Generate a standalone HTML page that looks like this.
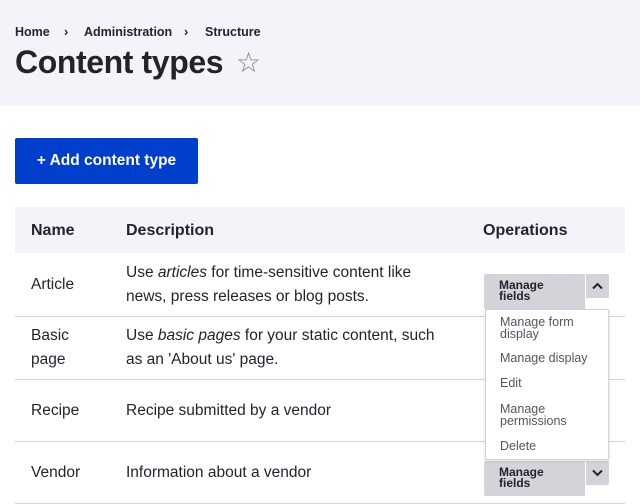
<!DOCTYPE html>
<html><head><meta charset="utf-8"><style>
*{margin:0;padding:0;box-sizing:border-box}
body{width:640px;height:504px;overflow:hidden;background:#fff;font-family:"Liberation Sans",sans-serif;color:#222330;position:relative}
.a{position:absolute;white-space:nowrap}
.hdr{position:absolute;left:0;top:0;width:640px;height:106px;background:#f3f4f9}
.bc{font-size:12.5px;font-weight:bold;top:25px;color:#222330}
h1{position:absolute;left:15px;top:44px;font-size:32px;font-weight:bold;letter-spacing:-0.4px;color:#232429}
.star{left:236px;top:46px;font-size:28px;color:#828388}
.btn{position:absolute;left:15px;top:138px;width:183px;height:46px;background:#003ecc;border-radius:2px;color:#fff;font-weight:bold;font-size:15.5px;line-height:46px;text-align:center}
.th{position:absolute;left:15px;top:207px;width:610px;height:46px;background:#f3f4f9}
.t{font-size:15.5px;line-height:24px}
.b{font-weight:bold}
.line{position:absolute;left:15px;width:610px;height:1px;background:#d4d4d8}
.mf{position:absolute;left:484px;width:101px;height:35px;background:#d3d4d9;border-radius:2px 0 0 2px;font-size:12px;font-weight:bold;line-height:11px;padding:6px 0 0 15px;color:#222330}
.tg{position:absolute;left:586px;width:23px;height:24px;background:#d3d4d9;border-radius:0 2px 2px 0}
.dd{position:absolute;left:485px;top:309px;width:124px;height:151px;background:#fff;border:1px solid #d4d4d8;box-shadow:0 1px 3px rgba(0,0,0,.15)}
.it{position:absolute;left:14px;font-size:12.5px;line-height:11.5px;color:#545560;white-space:nowrap}
</style></head><body>
<div class="hdr"></div>
<div class="a bc" style="left:15px">Home</div>
<div class="a bc" style="left:64px">›</div>
<div class="a bc" style="left:84px">Administration</div>
<div class="a bc" style="left:184px">›</div>
<div class="a bc" style="left:205px">Structure</div>
<h1>Content types</h1>
<div class="a star">☆</div>
<div class="btn">+ Add content type</div>
<div class="th"></div>
<div class="a t b" style="left:31px;top:219px;font-size:16px">Name</div>
<div class="a t b" style="left:126px;top:219px;font-size:16px">Description</div>
<div class="a t b" style="left:483px;top:219px;font-size:16px">Operations</div>

<div class="a t" style="left:31px;top:273px">Article</div>
<div class="a t" style="left:126px;top:261px">Use <i>articles</i> for time-sensitive content like<br>news, press releases or blog posts.</div>
<div class="line" style="top:316px"></div>
<div class="a t" style="left:31px;top:324px">Basic<br>page</div>
<div class="a t" style="left:126px;top:324px">Use <i>basic pages</i> for your static content, such<br>as an 'About us' page.</div>
<div class="line" style="top:379px"></div>
<div class="a t" style="left:31px;top:399px">Recipe</div>
<div class="a t" style="left:126px;top:399px">Recipe submitted by a vendor</div>
<div class="line" style="top:441px"></div>
<div class="a t" style="left:31px;top:461px">Vendor</div>
<div class="a t" style="left:126px;top:461px">Information about a vendor</div>
<div class="line" style="top:503px"></div>

<div class="mf" style="top:274px">Manage<br>fields</div>
<div class="tg" style="top:274px"><svg width="23" height="24"><path d="M7 14.5l4.5-4.5 4.5 4.5" fill="none" stroke="#222330" stroke-width="2"/></svg></div>
<div class="mf" style="top:461px">Manage<br>fields</div>
<div class="tg" style="top:461px"><svg width="23" height="24"><path d="M7 9.5l4.5 4.5 4.5-4.5" fill="none" stroke="#222330" stroke-width="2"/></svg></div>

<div class="dd">
<div class="it" style="top:7px">Manage form<br>display</div>
<div class="it" style="top:43px">Manage display</div>
<div class="it" style="top:68px">Edit</div>
<div class="it" style="top:94px">Manage<br>permissions</div>
<div class="it" style="top:131px">Delete</div>
</div>
</body></html>
